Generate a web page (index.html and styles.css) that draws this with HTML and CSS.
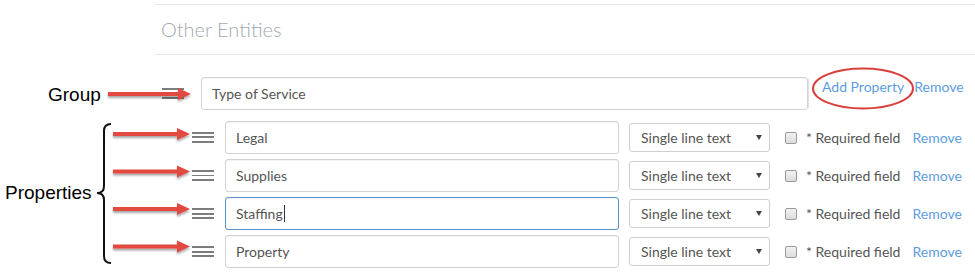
FILE: index.html
```html
<!DOCTYPE html>
<html lang="en">
<head>
    <meta charset="UTF-8">
    <title>Other Entities</title>
    <link rel="stylesheet" href="styles.css">
</head>
<body>
    <div class="page">
        <section class="entities">
            <h3 class="entities-title">Other Entities</h3>

            <div class="group-row">
                <span class="handle"></span>
                <input type="text" class="field group-field" value="Type of Service">
                <a href="#" class="link add-link">Add Property</a>
                <a href="#" class="link group-remove">Remove</a>
            </div>

            <div class="prop-list">
                <div class="prop-row">
                    <span class="handle"></span>
                    <input type="text" class="field prop-field" value="Legal">
                    <span class="select-wrap">
                        <select class="type-select"><option>Single line text</option></select>
                    </span>
                    <input type="checkbox" class="req-box">
                    <label class="req-label">* Required field</label>
                    <a href="#" class="link">Remove</a>
                </div>

                <div class="prop-row">
                    <span class="handle"></span>
                    <input type="text" class="field prop-field" value="Supplies">
                    <span class="select-wrap">
                        <select class="type-select"><option>Single line text</option></select>
                    </span>
                    <input type="checkbox" class="req-box">
                    <label class="req-label">* Required field</label>
                    <a href="#" class="link">Remove</a>
                </div>

                <div class="prop-row">
                    <span class="handle"></span>
                    <span class="field prop-field focused">Staffing<span class="caret"></span></span>
                    <span class="select-wrap">
                        <select class="type-select"><option>Single line text</option></select>
                    </span>
                    <input type="checkbox" class="req-box">
                    <label class="req-label">* Required field</label>
                    <a href="#" class="link">Remove</a>
                </div>

                <div class="prop-row">
                    <span class="handle"></span>
                    <input type="text" class="field prop-field" value="Property">
                    <span class="select-wrap">
                        <select class="type-select"><option>Single line text</option></select>
                    </span>
                    <input type="checkbox" class="req-box">
                    <label class="req-label">* Required field</label>
                    <a href="#" class="link">Remove</a>
                </div>
            </div>
        </section>

        <!-- annotations drawn over the form -->
        <svg class="notes" width="975" height="277" viewBox="0 0 975 277">
            <defs>
                <filter id="shade" x="-10%" y="-50%" width="120%" height="200%">
                    <feDropShadow dx="0" dy="2" stdDeviation="1" flood-color="#000" flood-opacity="0.35"/>
                </filter>
            </defs>

            <text class="note-label" x="48" y="101">Group</text>
            <text class="note-label" x="5" y="199">Properties</text>

            <path class="brace" d="M111 124 Q104 124 104 131 L104 186 Q104 193 97 193 Q104 193 104 200 L104 256 Q104 263 111 263"/>

            <g class="arrow" filter="url(#shade)">
                <line x1="108" y1="94" x2="181" y2="94"/>
                <polygon points="178,88 191,94 178,100"/>
            </g>
            <g class="arrow" filter="url(#shade)">
                <line x1="113" y1="134" x2="180" y2="134"/>
                <polygon points="177,128 190,134 177,140"/>
            </g>
            <g class="arrow" filter="url(#shade)">
                <line x1="113" y1="171.5" x2="180" y2="171.5"/>
                <polygon points="177,165.5 190,171.5 177,177.5"/>
            </g>
            <g class="arrow" filter="url(#shade)">
                <line x1="113" y1="209" x2="180" y2="209"/>
                <polygon points="177,203 190,209 177,215"/>
            </g>
            <g class="arrow" filter="url(#shade)">
                <line x1="113" y1="246.5" x2="180" y2="246.5"/>
                <polygon points="177,240.5 190,246.5 177,252.5"/>
            </g>

            <ellipse class="circle" cx="863" cy="88.5" rx="50" ry="20"/>
        </svg>
    </div>
</body>
</html>
```

FILE: styles.css
```css
* {
    box-sizing: border-box;
    margin: 0;
    padding: 0;
}

body {
    background: white;
    font-family: 'Lato', 'Open Sans', sans-serif;
    color: #555;
}

.page {
    position: relative;
    width: 975px;
    height: 277px;
    overflow: hidden;
}

.entities {
    margin-left: 155px;
    padding-top: 4px;
}

.entities-title {
    border-top: 1px solid #e6e6e6;
    border-bottom: 1px solid #e6e6e6;
    padding: 13px 0 14px 6px;
    font-size: 20px;
    line-height: 22px;
    font-weight: 300;
    color: #a3a9b0;
}

.handle {
    flex: none;
    width: 22px;
    height: 11px;
    background: linear-gradient(#666 0 2px, transparent 2px 4.5px, #666 4.5px 6.5px, transparent 6.5px 9px, #666 9px 11px);
    opacity: 0.85;
}

.field {
    height: 33px;
    padding: 0 10px;
    border: 1px solid #d2d2d2;
    border-radius: 3px;
    font-family: inherit;
    font-size: 14px;
    color: #555;
    background: white;
    box-shadow: inset 0 1px 1px rgba(0,0,0,0.05);
    outline: none;
}

.link {
    color: #5d9de0;
    font-size: 14px;
    line-height: 20px;
    text-decoration: none;
}

.group-row {
    display: flex;
    align-items: center;
    margin-top: 22px;
    padding-left: 7px;
}

.group-field {
    width: 607px;
    margin-left: 17px;
    box-shadow: inset 0 1px 1px rgba(0,0,0,0.05), 3px 0 0 -2px #e2e2e2;
}

.group-row .link {
    align-self: flex-start;
}

.add-link {
    margin-left: 14px;
}

.group-remove {
    margin-left: 10px;
}

.prop-list {
    margin-top: 11px;
}

.prop-row {
    display: flex;
    align-items: center;
    height: 33px;
    margin-bottom: 5px;
    padding-left: 37px;
}

.prop-field {
    width: 394px;
    margin-left: 11px;
}

.focused {
    display: flex;
    align-items: center;
    border-color: #5b8fc7;
}

.caret {
    width: 1px;
    height: 17px;
    margin-left: 1px;
    background: #333;
}

.select-wrap {
    position: relative;
    margin-left: 10px;
}

.select-wrap::after {
    content: '';
    position: absolute;
    right: 8px;
    top: 12px;
    border-left: 3px solid transparent;
    border-right: 3px solid transparent;
    border-top: 5px solid #444;
}

.type-select {
    -webkit-appearance: none;
    appearance: none;
    display: block;
    width: 141px;
    height: 29px;
    padding: 0 20px 0 11px;
    border: 1px solid #cfcfcf;
    border-radius: 3px;
    background: white;
    font-family: inherit;
    font-size: 14px;
    color: #555;
}

.req-box {
    -webkit-appearance: none;
    appearance: none;
    width: 12px;
    height: 12px;
    margin-left: 15px;
    border: 1px solid #9a9a9a;
    border-radius: 2px;
    background: linear-gradient(#f2f2f2, #dcdcdc);
}

.req-label {
    margin-left: 9px;
    font-size: 14px;
    color: #555;
}

.prop-row .link {
    margin-left: 12px;
}

.notes {
    position: absolute;
    left: 0;
    top: 0;
    pointer-events: none;
}

.note-label {
    font-family: 'Liberation Sans', Arial, sans-serif;
    font-size: 19px;
    fill: #000;
}

.brace {
    fill: none;
    stroke: #111;
    stroke-width: 2;
}

.arrow line {
    stroke: #e2483f;
    stroke-width: 4;
}

.arrow polygon {
    fill: #e2483f;
}

.circle {
    fill: none;
    stroke: #d8403b;
    stroke-width: 2;
}
```
